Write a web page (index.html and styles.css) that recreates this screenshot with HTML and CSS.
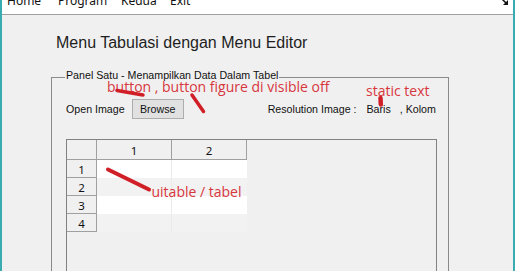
FILE: index.html
```html
<!DOCTYPE html>
<html lang="id">
<head>
    <meta charset="UTF-8">
    <meta name="viewport" content="width=device-width, initial-scale=1.0">
    <title>Menu Tabulasi dengan Menu Editor</title>
    <link rel="stylesheet" href="styles.css">
</head>
<body>
    <div class="window">
        <div class="menubar">
            <span>Home</span>
            <span>Program</span>
            <span>Kedua</span>
            <span>Exit</span>
        </div>

        <h1 class="title">Menu Tabulasi dengan Menu Editor</h1>

        <fieldset class="panel">
            <legend>Panel Satu - Menampilkan Data Dalam Tabel</legend>
            <div class="controls">
                <span>Open Image</span>
                <button class="browse">Browse</button>
                <span class="res-label">Resolution Image :</span>
                <span class="baris">Baris</span>
                <span class="kolom">, Kolom</span>
            </div>

            <div class="uitable">
                <div class="grid">
                    <div class="hd corner"></div>
                    <div class="hd">1</div>
                    <div class="hd">2</div>

                    <div class="rh">1</div>
                    <div class="cell odd c1"></div>
                    <div class="cell odd"></div>

                    <div class="rh">2</div>
                    <div class="cell even c1"></div>
                    <div class="cell even"></div>

                    <div class="rh">3</div>
                    <div class="cell odd c1"></div>
                    <div class="cell odd"></div>

                    <div class="rh">4</div>
                    <div class="cell even c1"></div>
                    <div class="cell even"></div>
                </div>
            </div>
        </fieldset>
    </div>

    <!-- red notes drawn over the screenshot -->
    <div class="note note-button">button , button figure di visible off</div>
    <div class="note note-static">static text</div>
    <div class="note note-table">uitable / tabel</div>
    <svg class="marks" width="515" height="271" viewBox="0 0 515 271">
        <g stroke="#d11f27" stroke-linecap="round" fill="none">
            <line x1="117" y1="90.5" x2="143" y2="95" stroke-width="3.5"/>
            <line x1="192" y1="95" x2="203.5" y2="111.5" stroke-width="3.5"/>
            <line x1="380.5" y1="98" x2="380.8" y2="104.5" stroke-width="4.5"/>
            <line x1="108" y1="169.5" x2="149" y2="189.5" stroke-width="4"/>
        </g>
        <g fill="#111">
            <line x1="501" y1="-2" x2="506" y2="3" stroke="#111" stroke-width="1.5"/>
            <polygon points="503,5 508,5 508,0"/>
        </g>
    </svg>
</body>
</html>
```

FILE: styles.css
```css
body {
    position: relative;
    margin: 0;
    background: #f0f0f0;
    font-family: "Liberation Sans", Arial, sans-serif;
    overflow: hidden;
}
.window {
    width: 515px;
    height: 271px;
    box-sizing: border-box;
    border-left: 2px solid #38acb0;
    border-right: 2px solid #38acb0;
    background: #f0f0f0;
    overflow: hidden;
}
.menubar {
    display: grid;
    grid-template-columns: 51px 63px 49px auto;
    height: 14px;
    padding-left: 5px;
    background: #fff;
    border-bottom: 1px solid #a0a0a0;
    overflow: hidden;
    font-family: "Noto Sans", sans-serif;
    font-size: 12px;
    color: #111;
}
.menubar span {
    line-height: 14px;
    margin-top: -6px;
}
.title {
    margin: 18px 0 0 54px;
    font-size: 16px;
    font-weight: normal;
    line-height: 19px;
    color: #1e1e1e;
}
.panel {
    margin: 17px 0 0 49px;
    width: 398px;
    height: 240px;
    box-sizing: border-box;
    min-width: 0;
    padding: 0;
    border: 1px solid #8a8a8a;
}
.panel legend {
    margin-left: 13px;
    padding: 0 1px 4px;
    font-size: 10.67px;
    line-height: 12px;
    color: #111;
}
.controls {
    display: flex;
    align-items: baseline;
    margin-top: 14px;
    padding-left: 14px;
    font-size: 10.67px;
    color: #111;
}
.browse {
    margin-left: 7px;
    width: 52px;
    height: 20px;
    padding: 0;
    border: 1px solid #adadad;
    background: #e1e1e1;
    font-family: "Liberation Sans", Arial, sans-serif;
    font-size: 10.67px;
    color: #111;
}
.res-label {
    margin-left: 84px;
}
.baris {
    margin-left: 10px;
}
.kolom {
    margin-left: 9px;
}
.uitable {
    margin: 20px 0 0 14px;
    width: 371px;
    height: 150px;
    box-sizing: border-box;
    border: 1px solid #828282;
    background: #f0f0f0;
}
.grid {
    display: grid;
    grid-template-columns: 30px 75px 75px;
    grid-template-rows: 20px repeat(4, 18px);
    font-family: "Noto Sans", sans-serif;
    font-size: 11.5px;
    color: #111;
}
.grid > div {
    box-sizing: border-box;
}
.hd, .rh {
    display: flex;
    align-items: center;
    justify-content: center;
    padding-top: 1px;
    background: #f0f0f0;
    border-right: 1px solid #a0a0a0;
    border-bottom: 1px solid #a0a0a0;
}
.cell.odd {
    background: #fff;
}
.cell.even {
    background: #f2f2f2;
}
.cell.c1 {
    border-right: 1px solid #ebebeb;
}
.note {
    position: absolute;
    font-family: "Open Sans", sans-serif;
    font-size: 14px;
    line-height: 14px;
    color: #d8363d;
    white-space: nowrap;
}
.note-button {
    top: 80px;
    left: 107px;
}
.note-static {
    top: 84px;
    left: 366px;
}
.note-table {
    top: 185px;
    left: 151.5px;
}
.marks {
    position: absolute;
    top: 0;
    left: 0;
    pointer-events: none;
}
```
